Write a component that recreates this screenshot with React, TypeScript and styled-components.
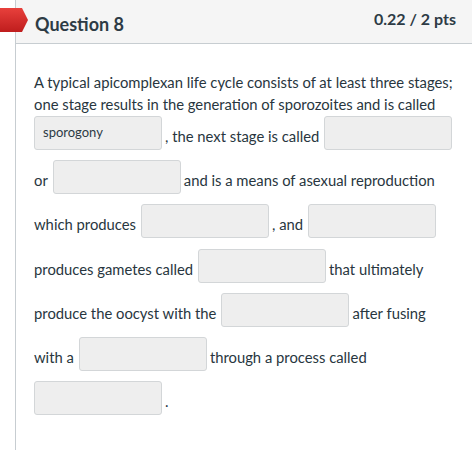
import React from "react";
import styled, { createGlobalStyle } from "styled-components";

const GlobalStyle = createGlobalStyle`
  html, body {
    margin: 0;
    padding: 0;
    background: #ffffff;
  }
  body {
    font-family: Lato, "Open Sans", "Liberation Sans", sans-serif;
    color: #2d3b45;
  }
`;

const Page = styled.div`
  position: relative;
  height: 450px;
  overflow: hidden;
  padding: 0 2px 0 15px;
`;

const QuestionBox = styled.section`
  border-left: 1px solid #c7cdd1;
  height: 100%;
`;

const Header = styled.header`
  display: flex;
  justify-content: space-between;
  align-items: flex-start;
  height: 44px;
  box-sizing: border-box;
  background: #f5f5f5;
  border-bottom: 1px solid #c7cdd1;
  padding: 0 16px 0 19px;
`;

const Title = styled.h2`
  margin: 13px 0 0;
  font-size: 18px;
  line-height: 22px;
  font-weight: 700;
  color: #2d3b45;
`;

const Points = styled.div`
  margin-top: 9px;
  font-size: 16px;
  line-height: 20px;
  font-weight: 700;
  color: #2d3b45;
`;

const Flag = styled.svg`
  position: absolute;
  left: 0;
  top: 7px;
`;

const Body = styled.div`
  padding: 27px 16px 0 18px;
  font-size: 14.8px;
  color: #283640;
`;

const Lead = styled.p`
  margin: 0;
  line-height: 22px;
`;

const Blanks = styled.div`
  display: flex;
  flex-direction: column;
  gap: 10.2px;
  margin-top: 1px;
`;

const Row = styled.div`
  display: flex;
  align-items: flex-start;
  gap: 3px;
  height: 34px;
`;

const Words = styled.span`
  margin-top: 11px;
  margin-right: 2px;
  line-height: 18px;
  white-space: nowrap;
`;

const Blank = styled.div`
  width: 128px;
  height: 34px;
  box-sizing: border-box;
  flex: none;
  background: #eeeeee;
  border: 1px solid #d3d6d8;
  border-radius: 3px;
  padding: 0 8px;
  font-size: 13px;
  line-height: 30px;
  color: #2d3b45;
`;

type Part = string | { answer: string };

const rows: Part[][] = [
  [{ answer: "sporogony" }, ", the next stage is called", { answer: "" }],
  ["or", { answer: "" }, "and is a means of asexual reproduction"],
  ["which produces", { answer: "" }, ", and", { answer: "" }],
  ["produces gametes called", { answer: "" }, "that ultimately"],
  ["produce the oocyst with the", { answer: "" }, "after fusing"],
  ["with a", { answer: "" }, "through a process called"],
  [{ answer: "" }, "."],
];

export default function App() {
  return (
    <>
      <GlobalStyle />
      <Page>
        <Flag width="29" height="26" viewBox="0 0 29 26">
          <defs>
            <linearGradient id="flagFill" x1="0" y1="0" x2="0" y2="1">
              <stop offset="0" stopColor="#e8403c" />
              <stop offset="1" stopColor="#bf1d1d" />
            </linearGradient>
          </defs>
          <polygon points="0,1 22,1 28,13 22,25 0,25" fill="url(#flagFill)" />
        </Flag>
        <QuestionBox>
          <Header>
            <Title>Question 8</Title>
            <Points>0.22 / 2 pts</Points>
          </Header>
          <Body>
            <Lead>
              A typical apicomplexan life cycle consists of at least three stages;
              <br />
              one stage results in the generation of sporozoites and is called
            </Lead>
            <Blanks>
              {rows.map((parts, i) => (
                <Row key={i}>
                  {parts.map((part, j) =>
                    typeof part === "string" ? (
                      <Words key={j}>{part}</Words>
                    ) : (
                      <Blank key={j}>{part.answer}</Blank>
                    )
                  )}
                </Row>
              ))}
            </Blanks>
          </Body>
        </QuestionBox>
      </Page>
    </>
  );
}
